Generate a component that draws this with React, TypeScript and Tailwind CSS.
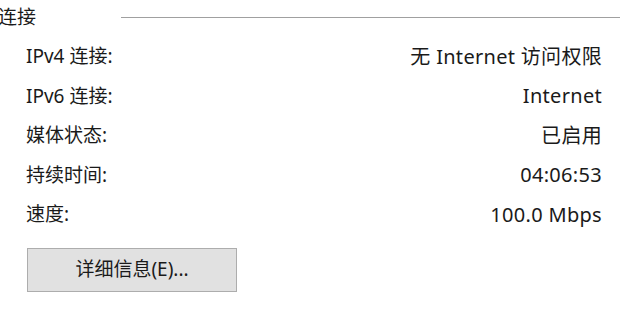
const rows = [
  { label: 'IPv4 连接:', value: '无 Internet 访问权限' },
  { label: 'IPv6 连接:', value: 'Internet' },
  { label: '媒体状态:', value: '已启用' },
  { label: '持续时间:', value: '04:06:53' },
  { label: '速度:', value: '100.0 Mbps' },
]

export default function App() {
  return (
    <div
      className="h-[309px] w-[620px] overflow-hidden bg-white text-[19px] text-[#1a1a1a]"
      style={{ fontFamily: '"Noto Sans", "Noto Sans CJK SC", sans-serif' }}
    >
      <div className="flex h-[34px] items-center">
        <div className="-ml-[2px] w-[123px] leading-none">连接</div>
        <div className="h-px flex-1 bg-[#a0a0a0]" />
      </div>

      <div className="pl-[26px] pr-[18px] pt-[3px]">
        {rows.map((r) => (
          <div key={r.label} className="flex h-[39.5px] items-center justify-between leading-none">
            <span>{r.label}</span>
            <span className="text-[20px] tracking-[0.3px]">{r.value}</span>
          </div>
        ))}
      </div>

      <div className="pl-[27px] pt-[13px]">
        <button className="flex h-[44px] w-[210px] items-center justify-center border border-[#adadad] bg-[#e1e1e1] leading-none">
          详细信息(E)...
        </button>
      </div>
    </div>
  )
}
